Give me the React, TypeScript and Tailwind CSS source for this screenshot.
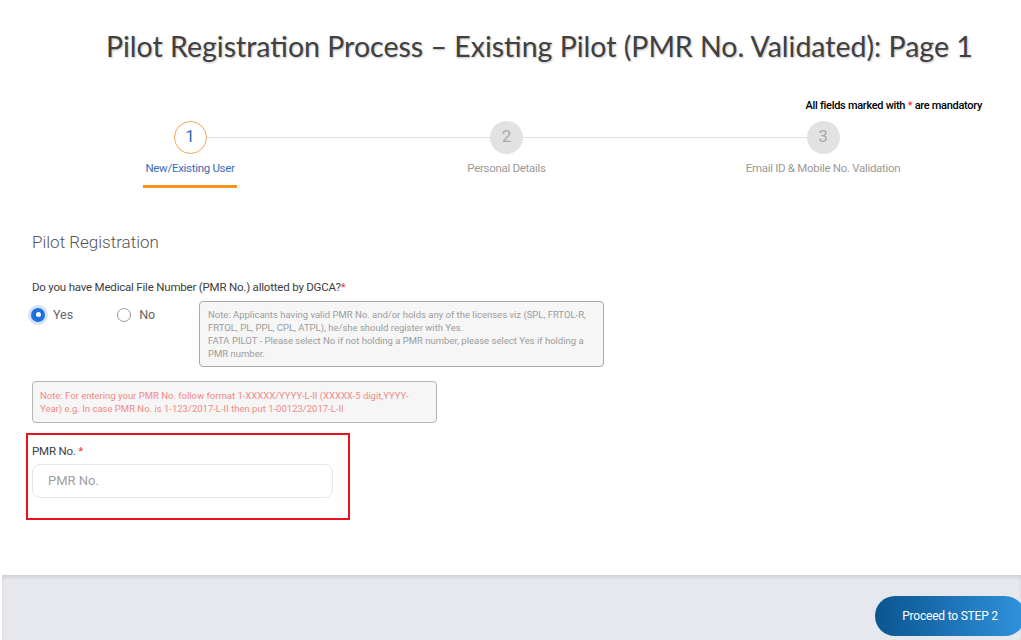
import { useState } from 'react'

const steps = [
  { n: 1, label: 'New/Existing User' },
  { n: 2, label: 'Personal Details' },
  { n: 3, label: 'Email ID & Mobile No. Validation' },
]

function Stepper() {
  return (
    <div className="relative ml-[142px] mt-[6px] flex w-[729px] justify-between">
      {/* connector line behind the circles */}
      <div className="absolute left-[48px] right-[48px] top-[16px] h-px bg-[#dedede]" />
      {steps.map((step) => {
        const active = step.n === 1
        return (
          <div key={step.n} className="relative flex w-[96px] flex-col items-center">
            <div
              className={
                active
                  ? 'flex h-[33px] w-[33px] items-center justify-center rounded-full border border-[#f5a54f] bg-white text-[17px] text-[#3a6db5]'
                  : 'flex h-[33px] w-[33px] items-center justify-center rounded-full bg-[#e2e2e2] text-[17px] text-[#a9a9a9]'
              }
            >
              {step.n}
            </div>
            <div
              className={
                active
                  ? 'mt-[6px] whitespace-nowrap text-[11.5px] tracking-[-0.3px] text-[#3a6db5]'
                  : 'mt-[6px] whitespace-nowrap text-[11.5px] tracking-[-0.3px] text-[#9a9a9a]'
              }
            >
              {step.label}
            </div>
            {active && <div className="mt-[8px] h-[3px] w-[94px] bg-[#f7941d]" />}
          </div>
        )
      })}
    </div>
  )
}

function Radio({ checked, label, onClick }: { checked: boolean; label: string; onClick: () => void }) {
  return (
    <button type="button" onClick={onClick} className="flex items-center gap-[8px]">
      {checked ? (
        <span className="flex h-[14px] w-[14px] items-center justify-center rounded-full bg-[#1e6fe0] shadow-[0_0_0_3px_rgba(30,111,224,0.2)]">
          <span className="h-[5px] w-[5px] rounded-full bg-white" />
        </span>
      ) : (
        <span className="h-[14px] w-[14px] rounded-full border border-[#9a9a9a] bg-white" />
      )}
      <span className="text-[12.5px] text-[#666]">{label}</span>
    </button>
  )
}

export default function App() {
  const [hasPmr, setHasPmr] = useState(true)

  return (
    <div className="flex h-[640px] w-[1021px] flex-col overflow-hidden bg-white font-['Roboto',sans-serif]">
      <h1 className="ml-[106px] mt-[28px] whitespace-nowrap font-['Lato',sans-serif] text-[28.5px] leading-[36px] text-[#404040] [text-shadow:1px_1px_2px_rgba(0,0,0,0.25)]">
        Pilot Registration Process – Existing Pilot (PMR No. Validated): Page 1
      </h1>

      <div className="mr-[39px] mt-[34px] self-end text-[11px] font-medium tracking-[-0.3px] text-black">
        All fields marked with <span className="text-[#e53935]">*</span> are mandatory
      </div>

      <Stepper />

      <div className="ml-[32px] mt-[42px] text-[17px] font-light text-[#555]">Pilot Registration</div>

      <div className="ml-[32px] mt-[24px] text-[11.5px] tracking-[-0.2px] text-[#3d3d3d]">
        Do you have Medical File Number (PMR No.) allotted by DGCA?<span className="text-[#e53935]">*</span>
      </div>

      <div className="ml-[31px] mt-[4px] flex items-start">
        <div className="mt-[5px] flex w-[168px] gap-[44px]">
          <Radio checked={hasPmr} label="Yes" onClick={() => setHasPmr(true)} />
          <Radio checked={!hasPmr} label="No" onClick={() => setHasPmr(false)} />
        </div>
        <div className="w-[405px] rounded-[4px] border border-[#a8a8a8] bg-[#f6f6f6] px-[8px] py-[6px] text-[9.5px] leading-[13px] text-[#9c9c9c]">
          Note: Applicants having valid PMR No. and/or holds any of the licenses viz (SPL, FRTOL-R, FRTOL, PL, PPL, CPL,
          ATPL), he/she should register with Yes.
          <br />
          FATA PILOT - Please select No if not holding a PMR number, please select Yes if holding a PMR number.
        </div>
      </div>

      <div className="ml-[32px] mt-[14px] w-[405px] rounded-[4px] border border-[#b5b5b5] bg-[#f6f6f6] px-[7px] py-[7px] text-[9.5px] leading-[13px] text-[#f08a84]">
        Note: For entering your PMR No. follow format 1-XXXXX/YYYY-L-II (XXXXX-5 digit,YYYY-Year) e.g. In case PMR No. is
        1-123/2017-L-II then put 1-00123/2017-L-II
      </div>

      <div className="ml-[26px] mt-[10px] h-[87px] w-[324px] border-2 border-[#e8141b] px-[4px] pt-[8px]">
        <div className="text-[11.5px] tracking-[-0.2px] text-[#3d3d3d]">
          PMR No. <span className="text-[#e53935]">*</span>
        </div>
        <input
          placeholder="PMR No."
          className="mt-[4px] h-[34px] w-[301px] rounded-[8px] border border-[#e6e6e6] bg-white px-[15px] text-[13px] text-[#555] outline-none placeholder:text-[#a0a0a0]"
        />
      </div>

      <div className="ml-[2px] mt-auto flex h-[65px] justify-end bg-[#e7e8ed] pt-[21px] shadow-[inset_0_3px_4px_-1px_rgba(0,0,0,0.12)]">
        <button
          type="button"
          className="mr-[-4px] h-[40px] w-[150px] rounded-full bg-gradient-to-r from-[#0a5590] to-[#2f93dc] text-[12px] tracking-[-0.2px] text-white"
        >
          Proceed to STEP 2
        </button>
      </div>
    </div>
  )
}
